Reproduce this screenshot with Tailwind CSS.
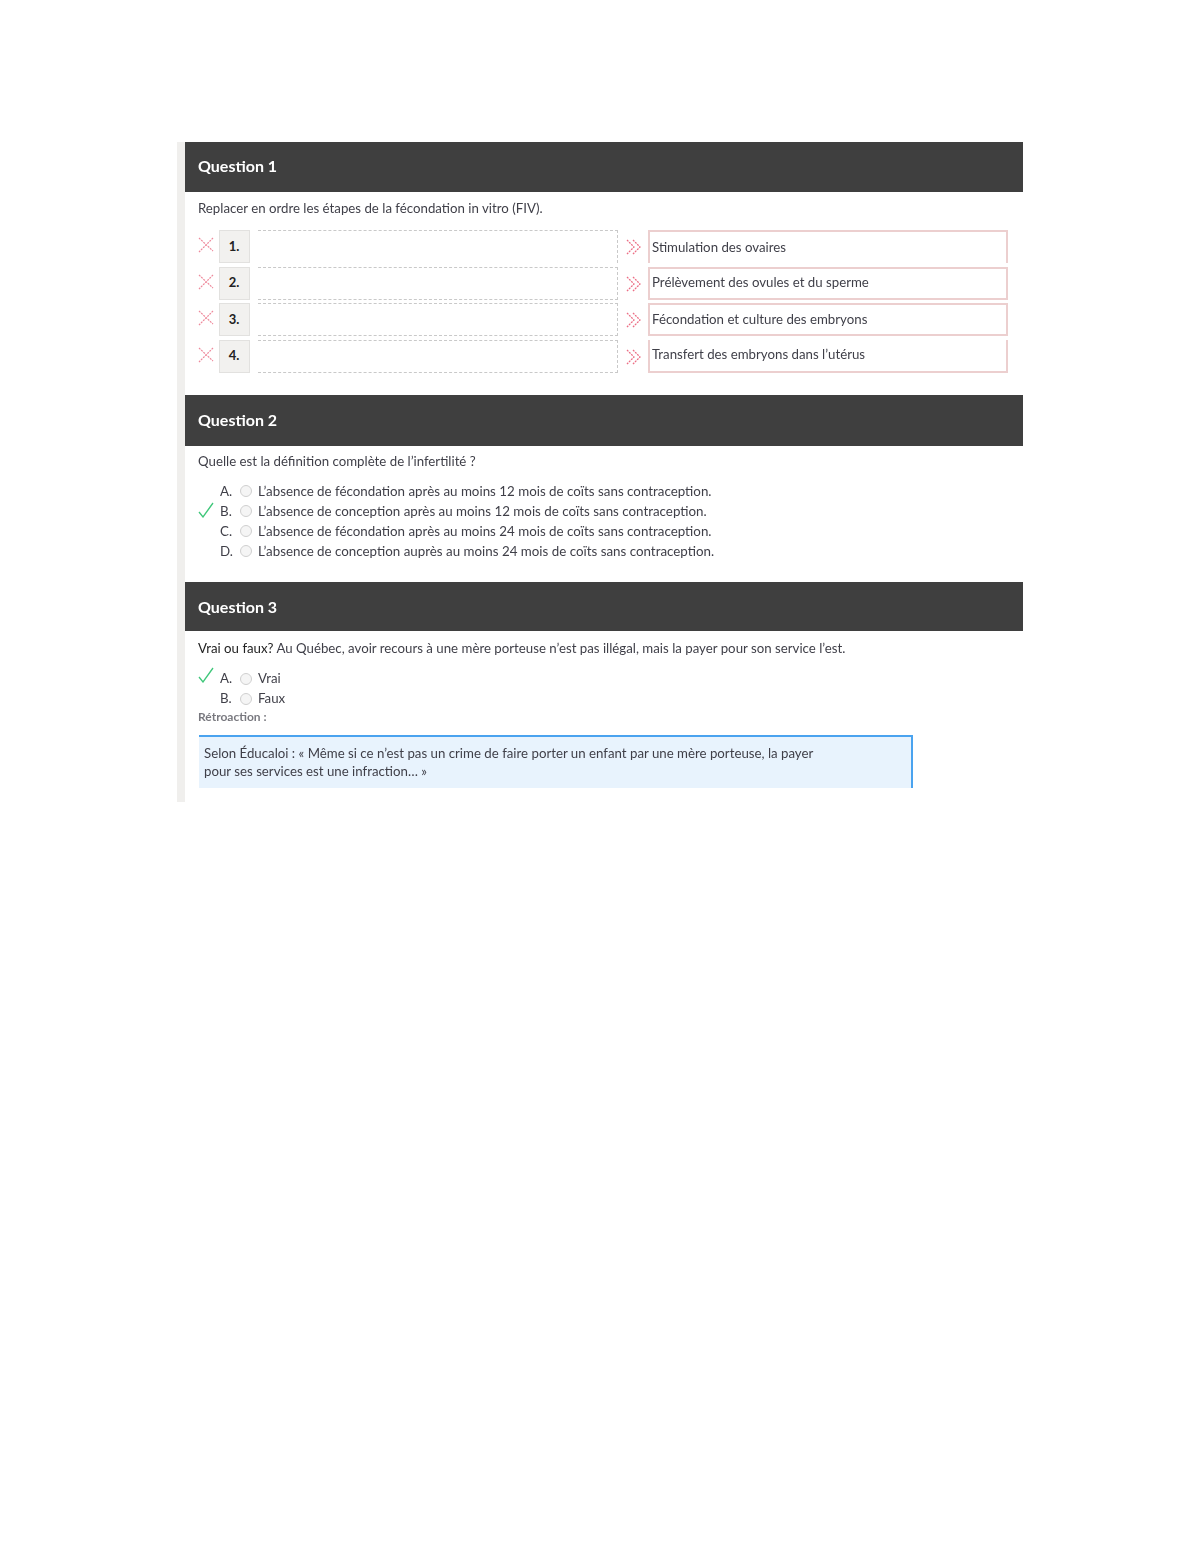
<!DOCTYPE html>
<html lang="fr">
<head>
<meta charset="UTF-8">
<title>Questions</title>
<script src="https://cdn.jsdelivr.net/npm/@tailwindcss/browser@4"></script>
</head>
<body class="bg-white font-['Lato','Liberation_Sans',sans-serif] text-[13.25px] text-[#3f3f48]">
<div class="pt-[141px] pl-[177px] blur-[0.35px]">
  <div class="w-[846px] h-[660px] border-l-8 border-[#f0efed]">

    <!-- Question 1 -->
    <div class="h-[50px] mt-px pb-[2px] bg-[#3f3f3f] flex items-center pl-[13px] text-white font-bold text-[16px]">Question 1</div>
    <div class="h-[203px] pl-[13px]">
      <p class="pt-[7px] h-[38px] leading-[18px]">Replacer en ordre les étapes de la fécondation in vitro (FIV).</p>
      <div class="flex flex-col gap-[3.5px]">

        <div class="flex h-[33px]">
          <svg class="w-[16px] h-[16px] mt-[7px] mr-[5px]" viewBox="0 0 16 16" fill="none" stroke="#ee8a9c" stroke-width="1.2" stroke-dasharray="2 1"><path d="M1 1l14 13M15 1L1 15"/></svg>
          <div class="w-[31px] h-[33px] bg-[#f2f1ef] border border-[#e2e1df] flex items-center justify-center pr-px font-bold text-[13px] text-[#222]">1.</div>
          <div class="w-[360px] h-[33px] ml-2 border border-dashed border-[#c9c9c9] border-l-0 border-b-0"></div>
          <svg class="w-[16px] h-[16px] mt-[9px] ml-2 mr-[6px]" viewBox="0 0 16 16" fill="none" stroke="#ec6f86" stroke-width="1.3" stroke-dasharray="2 1"><path d="M1 1l7 7-7 7M7 1l7 7-7 7"/></svg>
          <div class="w-[360px] h-[33px] border-2 border-b-0 border-[#eccfcf] flex items-center pl-[2px]">Stimulation des ovaires</div>
        </div>

        <div class="flex h-[33px]">
          <svg class="w-[16px] h-[16px] mt-[7px] mr-[5px]" viewBox="0 0 16 16" fill="none" stroke="#ee8a9c" stroke-width="1.2" stroke-dasharray="2 1"><path d="M1 1l14 13M15 1L1 15"/></svg>
          <div class="w-[31px] h-[33px] bg-[#f2f1ef] border border-[#e2e1df] flex items-center justify-center pr-px font-bold text-[13px] text-[#222]">2.</div>
          <div class="w-[360px] h-[33px] ml-2 border border-dashed border-[#c9c9c9] border-l-0"></div>
          <svg class="w-[16px] h-[16px] mt-[9px] ml-2 mr-[6px]" viewBox="0 0 16 16" fill="none" stroke="#ec6f86" stroke-width="1.3" stroke-dasharray="2 1"><path d="M1 1l7 7-7 7M7 1l7 7-7 7"/></svg>
          <div class="w-[360px] h-[33px] border-2 border-[#eccfcf] flex items-center pl-[2px]">Prélèvement des ovules et du sperme</div>
        </div>

        <div class="flex h-[33px]">
          <svg class="w-[16px] h-[16px] mt-[7px] mr-[5px]" viewBox="0 0 16 16" fill="none" stroke="#ee8a9c" stroke-width="1.2" stroke-dasharray="2 1"><path d="M1 1l14 13M15 1L1 15"/></svg>
          <div class="w-[31px] h-[33px] bg-[#f2f1ef] border border-[#e2e1df] flex items-center justify-center pr-px font-bold text-[13px] text-[#222]">3.</div>
          <div class="w-[360px] h-[33px] ml-2 border border-dashed border-[#c9c9c9] border-l-0"></div>
          <svg class="w-[16px] h-[16px] mt-[9px] ml-2 mr-[6px]" viewBox="0 0 16 16" fill="none" stroke="#ec6f86" stroke-width="1.3" stroke-dasharray="2 1"><path d="M1 1l7 7-7 7M7 1l7 7-7 7"/></svg>
          <div class="w-[360px] h-[33px] border-2 border-[#eccfcf] flex items-center pl-[2px]">Fécondation et culture des embryons</div>
        </div>

        <div class="flex h-[33px]">
          <svg class="w-[16px] h-[16px] mt-[7px] mr-[5px]" viewBox="0 0 16 16" fill="none" stroke="#ee8a9c" stroke-width="1.2" stroke-dasharray="2 1"><path d="M1 1l14 13M15 1L1 15"/></svg>
          <div class="w-[31px] h-[33px] bg-[#f2f1ef] border border-[#e2e1df] flex items-center justify-center pr-px font-bold text-[13px] text-[#222]">4.</div>
          <div class="w-[360px] h-[33px] ml-2 border border-dashed border-[#c9c9c9] border-l-0"></div>
          <svg class="w-[16px] h-[16px] mt-[9px] ml-2 mr-[6px]" viewBox="0 0 16 16" fill="none" stroke="#ec6f86" stroke-width="1.3" stroke-dasharray="2 1"><path d="M1 1l7 7-7 7M7 1l7 7-7 7"/></svg>
          <div class="w-[360px] h-[33px] border-2 border-t-0 border-[#eccfcf] flex items-center pl-[2px]">Transfert des embryons dans l’utérus</div>
        </div>

      </div>
    </div>

    <!-- Question 2 -->
    <div class="h-[51px] pb-px bg-[#3f3f3f] flex items-center pl-[13px] text-white font-bold text-[16px]">Question 2</div>
    <div class="h-[136px] pl-[13px]">
      <p class="pt-[6px] h-[35px] leading-[18px]">Quelle est la définition complète de l’infertilité ?</p>
      <div class="flex items-center h-[20px] text-[13.35px]"><span class="w-[22px]"></span><span class="w-[20px]">A.</span><span class="w-[12px] h-[12px] rounded-full border border-[#cfcfcf] bg-[#f5f5f5] mr-[6px]"></span>L’absence de fécondation après au moins 12 mois de coïts sans contraception.</div>
      <div class="flex items-center h-[20px] text-[13.35px]"><svg class="w-[16px] h-[16px] mr-[6px] -mt-[3px]" viewBox="0 0 16 16" fill="none" stroke="#3fc77a" stroke-width="1.3"><path d="M1 10l4 5L15 1"/></svg><span class="w-[20px]">B.</span><span class="w-[12px] h-[12px] rounded-full border border-[#cfcfcf] bg-[#f5f5f5] mr-[6px]"></span>L’absence de conception après au moins 12 mois de coïts sans contraception.</div>
      <div class="flex items-center h-[20px] text-[13.35px]"><span class="w-[22px]"></span><span class="w-[20px]">C.</span><span class="w-[12px] h-[12px] rounded-full border border-[#cfcfcf] bg-[#f5f5f5] mr-[6px]"></span>L’absence de fécondation après au moins 24 mois de coïts sans contraception.</div>
      <div class="flex items-center h-[20px] text-[13.35px]"><span class="w-[22px]"></span><span class="w-[20px]">D.</span><span class="w-[12px] h-[12px] rounded-full border border-[#cfcfcf] bg-[#f5f5f5] mr-[6px]"></span>L’absence de conception auprès au moins 24 mois de coïts sans contraception.</div>
    </div>

    <!-- Question 3 -->
    <div class="h-[49px] bg-[#3f3f3f] flex items-center pl-[13px] text-white font-bold text-[16px]">Question 3</div>
    <div class="pl-[13px]">
      <p class="pt-[8px] h-[37px] leading-[18px]"><span class="text-[#222]">Vrai ou faux?</span> Au Québec, avoir recours à une mère porteuse n’est pas illégal, mais la payer pour son service l’est.</p>
      <div class="flex items-center h-[20px] mt-px"><svg class="w-[16px] h-[16px] mr-[6px] -mt-[8px]" viewBox="0 0 16 16" fill="none" stroke="#3fc77a" stroke-width="1.3"><path d="M1 10l4 5L15 1"/></svg><span class="w-[20px]">A.</span><span class="w-[12px] h-[12px] rounded-full border border-[#cfcfcf] bg-[#f5f5f5] mr-[6px]"></span>Vrai</div>
      <div class="flex items-center h-[20px]"><span class="w-[22px]"></span><span class="w-[20px]">B.</span><span class="w-[12px] h-[12px] rounded-full border border-[#cfcfcf] bg-[#f5f5f5] mr-[6px]"></span>Faux</div>
      <p class="text-[12px] font-bold leading-[18px] h-[18px] -mt-px mb-[9px] opacity-70">Rétroaction :</p>
      <div class="w-[714px] h-[53px] ml-px bg-[#e8f3fd] border-t-2 border-r-2 border-[#4aa3ef] pl-[5px] pt-[7px] leading-[18px]">Selon Éducaloi : « Même si ce n’est pas un crime de faire porter un enfant par une mère porteuse, la payer<br>pour ses services est une infraction… »</div>
    </div>

  </div>
</div>
</body>
</html>
